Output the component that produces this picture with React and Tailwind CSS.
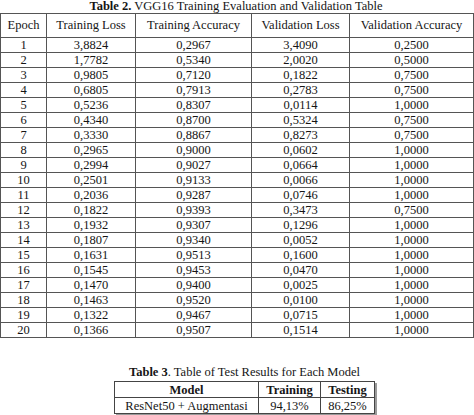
import React from "react";

const rows = [
  ["1", "3,8824", "0,2967", "3,4090", "0,2500"],
  ["2", "1,7782", "0,5340", "2,0020", "0,5000"],
  ["3", "0,9805", "0,7120", "0,1822", "0,7500"],
  ["4", "0,6805", "0,7913", "0,2783", "0,7500"],
  ["5", "0,5236", "0,8307", "0,0114", "1,0000"],
  ["6", "0,4340", "0,8700", "0,5324", "0,7500"],
  ["7", "0,3330", "0,8867", "0,8273", "0,7500"],
  ["8", "0,2965", "0,9000", "0,0602", "1,0000"],
  ["9", "0,2994", "0,9027", "0,0664", "1,0000"],
  ["10", "0,2501", "0,9133", "0,0066", "1,0000"],
  ["11", "0,2036", "0,9287", "0,0746", "1,0000"],
  ["12", "0,1822", "0,9393", "0,3473", "0,7500"],
  ["13", "0,1932", "0,9307", "0,1296", "1,0000"],
  ["14", "0,1807", "0,9340", "0,0052", "1,0000"],
  ["15", "0,1631", "0,9513", "0,1600", "1,0000"],
  ["16", "0,1545", "0,9453", "0,0470", "1,0000"],
  ["17", "0,1470", "0,9400", "0,0025", "1,0000"],
  ["18", "0,1463", "0,9520", "0,0100", "1,0000"],
  ["19", "0,1322", "0,9467", "0,0715", "1,0000"],
  ["20", "0,1366", "0,9507", "0,1514", "1,0000"],
];

const headers = ["Epoch", "Training Loss", "Training Accuracy", "Validation Loss", "Validation Accuracy"];

export default function App() {
  return (
    <div className="w-[474px] h-[415px] overflow-hidden bg-white text-[#151515] text-[12.5px] font-['Liberation_Serif','Times_New_Roman',serif]">
      {/* Table 2 caption */}
      <div className="h-[13px] leading-[13px] text-center pr-[2px]">
        <span className="font-bold">Table 2.</span> VGG16 Training Evaluation and Validation Table
      </div>

      <table className="table-fixed border-collapse w-[473px] shadow-[2px_0_0_#a8a8a8]">
        <colgroup>
          <col className="w-[46px]" />
          <col className="w-[89px]" />
          <col className="w-[116px]" />
          <col className="w-[98px]" />
          <col className="w-[124px]" />
        </colgroup>
        <thead>
          <tr className="h-[24px]">
            {headers.map((h) => (
              <th
                key={h}
                className="border border-[#555] font-normal text-center p-0 leading-none text-[12.5px] text-[#151515] font-['Liberation_Serif','Times_New_Roman',serif]"
              >
                {h}
              </th>
            ))}
          </tr>
        </thead>
        <tbody>
          {rows.map((r) => (
            <tr key={r[0]} className="h-[15px]">
              {r.map((c, i) => (
                <td
                  key={i}
                  className="border border-[#555] text-center p-0 leading-[13px] text-[12.5px] text-[#151515] font-['Liberation_Serif','Times_New_Roman',serif]"
                >
                  {c}
                </td>
              ))}
            </tr>
          ))}
        </tbody>
      </table>

      {/* Table 3 */}
      <div className="mt-[26px] flex flex-col items-center pl-[15px]">
        <div className="h-[16px] leading-[16px] text-center">
          <span className="font-bold">Table 3</span>. Table of Test Results for Each Model
        </div>
        <table className="table-fixed border-collapse w-[260px] mt-[1px] shadow-[2px_2px_0_#9a9a9a]">
          <colgroup>
            <col className="w-[144px]" />
            <col className="w-[62px]" />
            <col className="w-[54px]" />
          </colgroup>
          <thead>
            <tr className="h-[16px]">
              {["Model", "Training", "Testing"].map((h) => (
                <th
                  key={h}
                  className="border border-[#444] font-bold text-center p-0 leading-[14px] text-[12.5px] text-[#151515] font-['Liberation_Serif','Times_New_Roman',serif]"
                >
                  {h}
                </th>
              ))}
            </tr>
          </thead>
          <tbody>
            <tr className="h-[16px]">
              {["ResNet50 + Augmentasi", "94,13%", "86,25%"].map((c) => (
                <td
                  key={c}
                  className="border border-[#444] text-center p-0 leading-[14px] text-[12.5px] text-[#151515] font-['Liberation_Serif','Times_New_Roman',serif]"
                >
                  {c}
                </td>
              ))}
            </tr>
          </tbody>
        </table>
      </div>
    </div>
  );
}
